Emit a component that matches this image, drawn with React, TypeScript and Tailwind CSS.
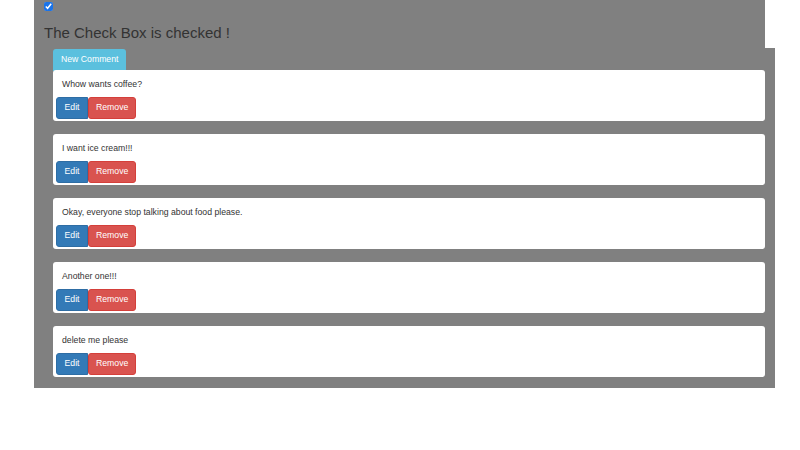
import { useState } from "react";

const initialComments = [
  "Whow wants coffee?",
  "I want ice cream!!!",
  "Okay, everyone stop talking about food please.",
  "Another one!!!",
  "delete me please",
];

function Comment({ text, onRemove }: { text: string; onRemove: () => void }) {
  return (
    <div className="bg-white rounded-[3px] h-[51px] pl-[3px] pt-[8px]">
      <p className="text-[8.7px] leading-[12px] text-[#333] pl-[6px]">{text}</p>
      <div className="flex mt-[7px]">
        <button className="h-[22px] px-[7.5px] text-[8.7px] text-white bg-[#337ab7] border border-[#2e6da4] rounded-l-[3px]">
          Edit
        </button>
        <button
          onClick={onRemove}
          className="h-[22px] px-[7px] text-[8.7px] text-white bg-[#d9534f] border border-[#d43f3a] rounded-[3px]"
        >
          Remove
        </button>
      </div>
    </div>
  );
}

export default function App() {
  const [checked, setChecked] = useState(true);
  const [comments, setComments] = useState(initialComments);

  return (
    <div className="min-h-[450px] bg-white font-['Liberation_Sans',Arial,sans-serif]">
      <div className="ml-[34px] w-[731px] h-[48px] bg-[#808080] pl-[10px]">
        <input
          type="checkbox"
          checked={checked}
          onChange={(e) => setChecked(e.target.checked)}
          className="block w-[9px] h-[9px] m-0 relative top-[2px] accent-[#1a73e8]"
        />
        <h2 className="mt-[14px] text-[15px] leading-[20px] text-[#333]">
          The Check Box is {checked ? "checked" : "unchecked"} !
        </h2>
      </div>

      <div className="ml-[34px] w-[741px] h-[340px] bg-[#808080] pt-px pl-[19px] pr-[10px]">
        <button className="block h-[22px] px-[8px] text-[8.7px] text-white bg-[#5bc0de] rounded-t-[3px]">
          New Comment
        </button>
        <div className="flex flex-col gap-[13px] -mt-px">
          {comments.map((c, i) => (
            <Comment key={i} text={c} onRemove={() => setComments(comments.filter((_, j) => j !== i))} />
          ))}
        </div>
      </div>
    </div>
  );
}
